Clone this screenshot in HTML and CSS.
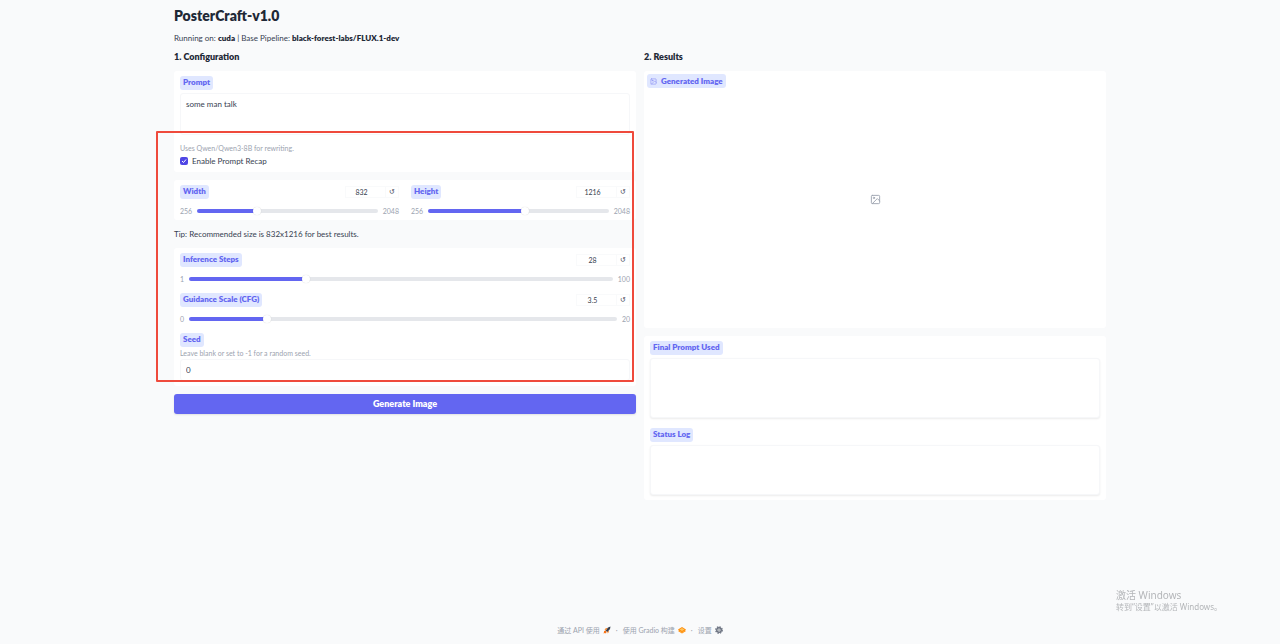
FILE: index.html
```html
<!DOCTYPE html>
<html lang="en">
<head>
  <meta charset="UTF-8" />
  <meta name="viewport" content="width=device-width, initial-scale=1.0" />
  <title>PosterCraft-v1.0</title>
  <link rel="stylesheet" href="styles.css">
</head>
<body>

  <main class="app">
    <!-- Header -->
    <header>
      <h1>PosterCraft-v1.0</h1>
      <p>Running on: <strong>cuda</strong> | Base Pipeline: <strong>black-forest-labs/FLUX.1-dev</strong></p>
    </header>

    <div class="columns">
      <!-- Configuration -->
      <section class="column">
        <h2>1. Configuration</h2>

        <div class="card">
          <label class="tag" for="prompt">Prompt</label>
          <textarea id="prompt" class="box prompt-box">some man talk</textarea>
          <p class="hint recap-hint">Uses Qwen/Qwen3-8B for rewriting.</p>
          <label class="check">
            <input type="checkbox" checked>
            Enable Prompt Recap
          </label>
        </div>

        <div class="card size-row">
          <div class="slider">
            <div class="slider-head">
              <label class="tag" for="width">Width</label>
              <input class="number" type="text" value="832" aria-label="Width value">
              <button class="reset" aria-label="Reset width">↺</button>
            </div>
            <div class="slider-track">
              <span>256</span>
              <input id="width" type="range" min="256" max="2048" value="832" style="--fill: 32%">
              <span>2048</span>
            </div>
          </div>
          <div class="slider">
            <div class="slider-head">
              <label class="tag" for="height">Height</label>
              <input class="number" type="text" value="1216" aria-label="Height value">
              <button class="reset" aria-label="Reset height">↺</button>
            </div>
            <div class="slider-track">
              <span>256</span>
              <input id="height" type="range" min="256" max="2048" value="1216" style="--fill: 53%">
              <span>2048</span>
            </div>
          </div>
        </div>

        <p class="tip">Tip: Recommended size is 832x1216 for best results.</p>

        <div class="card settings">
          <div class="slider">
            <div class="slider-head">
              <label class="tag" for="steps">Inference Steps</label>
              <input class="number" type="text" value="28" aria-label="Inference steps value">
              <button class="reset" aria-label="Reset inference steps">↺</button>
            </div>
            <div class="slider-track">
              <span>1</span>
              <input id="steps" type="range" min="1" max="100" value="28" style="--fill: 27%">
              <span>100</span>
            </div>
          </div>
          <div class="slider">
            <div class="slider-head">
              <label class="tag" for="cfg">Guidance Scale (CFG)</label>
              <input class="number" type="text" value="3.5" aria-label="Guidance scale value">
              <button class="reset" aria-label="Reset guidance scale">↺</button>
            </div>
            <div class="slider-track">
              <span>0</span>
              <input id="cfg" type="range" min="0" max="20" step="0.1" value="3.5" style="--fill: 18%">
              <span>20</span>
            </div>
          </div>
          <div class="seed">
            <label class="tag" for="seed">Seed</label>
            <p class="hint">Leave blank or set to -1 for a random seed.</p>
            <input id="seed" class="box" type="text" value="0">
          </div>
        </div>

        <button class="generate">Generate Image</button>
        <div class="highlight"></div>
      </section>

      <!-- Results -->
      <section class="column">
        <h2>2. Results</h2>

        <div class="card image-card">
          <span class="tag image-tag">
            <svg class="icon" viewBox="0 0 24 24"><rect x="3" y="3" width="18" height="18" rx="2"/><circle cx="8.5" cy="8.5" r="1.5"/><path d="M21 15l-5-5L5 21"/></svg>
            Generated Image
          </span>
          <div class="placeholder">
            <svg class="icon" viewBox="0 0 24 24"><rect x="3" y="3" width="18" height="18" rx="2"/><circle cx="8.5" cy="8.5" r="1.5"/><path d="M21 15l-5-5L5 21"/></svg>
          </div>
        </div>

        <div class="card outputs">
          <div class="output">
            <label class="tag" for="final">Final Prompt Used</label>
            <textarea id="final" class="box final-box" readonly></textarea>
          </div>
          <div class="output">
            <label class="tag" for="status">Status Log</label>
            <textarea id="status" class="box status-box" readonly></textarea>
          </div>
        </div>
      </section>
    </div>
  </main>

  <footer>
    <a href="#">通过 API 使用
      <svg viewBox="0 0 16 16"><path d="M2 10l4-1 1 3-1 3-2-1-3 1 1-3z" fill="#f97316"/><path d="M5 9l5-6 5-2-1 5-5 6z" fill="#374151"/><path d="M3 7l3-3 3 0-3 5zM9 12l3-3v3l-3 3z" fill="#fb923c"/></svg>
    </a>
    <span>·</span>
    <a href="#">使用 Gradio 构建
      <svg viewBox="0 0 16 16"><path d="M0 7l8-5 8 5-2 2 2 1-8 5-8-5 2-1z" fill="#ff8c0a"/><path d="M3 7l5-3 5 3-5 3z" fill="#ffc45c"/><path d="M3 10l5 3 5-3" fill="none" stroke="#ffc45c"/></svg>
    </a>
    <span>·</span>
    <a href="#">设置
      <svg viewBox="0 0 16 16"><circle cx="8" cy="8" r="4.5" fill="none" stroke="#6b7280" stroke-width="3"/><circle cx="8" cy="8" r="6.5" fill="none" stroke="#6b7280" stroke-width="2.5" stroke-dasharray="3 2.1"/><circle cx="8" cy="8" r="1.5" fill="#4b5563"/></svg>
    </a>
  </footer>

  <div class="watermark">
    <p class="watermark-title">激活 Windows</p>
    <p>转到“设置”以激活 Windows。</p>
  </div>

</body>
</html>
```
FILE: styles.css
```css
/* General Reset */
* {
  margin: 0;
  padding: 0;
  box-sizing: border-box;
}
body {
  display: flex;
  flex-direction: column;
  min-height: 100vh;
  font-family: Lato, "Noto Sans CJK SC", sans-serif;
  font-size: 8px;
  line-height: 12px;
  background: #f9fafb;
  color: #374151;
}
input, textarea, button {
  font: inherit;
  color: inherit;
}
.app {
  width: 100%;
  max-width: 932px;
  margin: 0 auto;
  padding-top: 7px;
  flex: 1;
}

/* Header */
h1 {
  font-size: 14px;
  line-height: 18px;
  font-weight: 800;
  color: #1f2937;
}
header p {
  margin-top: 7px;
}
strong {
  font-weight: 800;
  color: #1f2937;
}
h2 {
  font-size: 9px;
  line-height: 12px;
  font-weight: 800;
  color: #1f2937;
}

/* Layout */
.columns {
  display: grid;
  grid-template-columns: 1fr 1fr;
  align-items: start;
  gap: 8px;
  margin-top: 7px;
}
.column {
  position: relative;
  display: flex;
  flex-direction: column;
  gap: 8px;
}
.card {
  padding: 5px 6px;
  background: #ffffff;
  border-radius: 3px;
}
.tag {
  display: inline-block;
  height: 14px;
  padding: 0 3px;
  font-weight: 800;
  line-height: 13px;
  white-space: nowrap;
  color: #6366f1;
  background: #e0e7ff;
  border-radius: 3px;
}
.box {
  display: block;
  width: 100%;
  padding: 4px 5px;
  background: #ffffff;
  border: 1px solid #f6f7f9;
  border-radius: 3px;
  outline: none;
  resize: none;
}
.hint {
  font-size: 7px;
  color: #9ca3af;
}

/* Prompt */
.prompt-box {
  height: 42px;
  margin-top: 3px;
}
.recap-hint {
  margin-top: 7px;
}
.check {
  display: flex;
  align-items: center;
  gap: 4px;
  margin-top: 1px;
}
.check input {
  appearance: none;
  width: 8px;
  height: 8px;
  background: #4f46e5 url("data:image/svg+xml,%3Csvg xmlns='http://www.w3.org/2000/svg' viewBox='0 0 16 16'%3E%3Cpath d='M4 8l3 3 5-6' fill='none' stroke='white' stroke-width='2'/%3E%3C/svg%3E");
  border-radius: 2px;
}

/* Sliders */
.size-row {
  display: grid;
  grid-template-columns: 1fr 1fr;
  gap: 12px;
  padding-bottom: 4px;
}
.slider-head {
  display: flex;
  align-items: center;
}
.number {
  width: 41px;
  height: 12px;
  margin-left: auto;
  padding-right: 8px;
  font-size: 7px;
  text-align: center;
  border: 1px solid #f9fafb;
  background: #ffffff;
}
.reset {
  width: 13px;
  height: 12px;
  border: 1px solid #f9fafb;
  border-left: none;
  background: #ffffff;
  font-family: "DejaVu Sans", sans-serif;
  font-size: 7px;
  line-height: 10px;
}
.slider-track {
  display: flex;
  align-items: center;
  gap: 5px;
  margin-top: 7px;
  font-size: 7px;
  line-height: 10px;
  color: #9ca3af;
}
.slider-track input {
  appearance: none;
  flex: 1;
  min-width: 0;
  height: 4px;
  border-radius: 2px;
  background: linear-gradient(to right, #6366f1 var(--fill), #e5e7eb var(--fill));
}
.slider-track input::-webkit-slider-thumb {
  appearance: none;
  width: 8px;
  height: 8px;
  background: #ffffff;
  border-radius: 50%;
  box-shadow: 0 0 1px rgba(0, 0, 0, 0.2);
}

/* Steps, guidance and seed */
.settings {
  display: flex;
  flex-direction: column;
  gap: 9px;
}
.generate {
  height: 20px;
  font-size: 9px;
  font-weight: 800;
  color: #ffffff;
  background: #6366f1;
  border: none;
  border-radius: 3px;
  box-shadow: 0 1px 2px rgba(0, 0, 0, 0.1);
}

/* Red frame round the settings */
.highlight {
  position: absolute;
  top: 80px;
  left: -18px;
  right: 2px;
  height: 251px;
  border: 2px solid #ef4a3c;
  border-radius: 1px;
  pointer-events: none;
}

/* Results */
.icon {
  fill: none;
  stroke: currentColor;
  stroke-width: 2;
  stroke-linecap: round;
  stroke-linejoin: round;
}
.image-card {
  display: flex;
  flex-direction: column;
  align-items: flex-start;
  height: 257px;
  padding: 3px;
}
.image-tag {
  display: flex;
  align-items: center;
  gap: 4px;
}
.image-tag .icon {
  width: 7px;
  height: 7px;
  opacity: 0.7;
}
.placeholder {
  flex: 1;
  align-self: stretch;
  display: flex;
  align-items: center;
  justify-content: center;
  padding-bottom: 14px;
  color: #9ca3af;
}
.placeholder .icon {
  width: 11px;
  height: 11px;
}
.outputs {
  display: flex;
  flex-direction: column;
  gap: 10px;
}
.output .box {
  margin-top: 3px;
  box-shadow: 0 1px 2px rgba(0, 0, 0, 0.08);
}
.final-box {
  height: 60px;
}
.status-box {
  height: 50px;
}

/* Footer */
footer {
  display: flex;
  justify-content: center;
  align-items: center;
  gap: 5px;
  padding-bottom: 8px;
  font-size: 7px;
  color: #9ca3af;
}
footer a {
  display: flex;
  align-items: center;
  gap: 3px;
  color: inherit;
  text-decoration: none;
}
footer svg {
  width: 8px;
  height: 8px;
}

/* System notice over the page corner */
.watermark {
  position: fixed;
  right: 58px;
  bottom: 31px;
  font-family: "Noto Sans", "Noto Sans CJK SC", sans-serif;
  color: #b4b6b9;
}
.watermark-title {
  font-size: 10px;
}
```
